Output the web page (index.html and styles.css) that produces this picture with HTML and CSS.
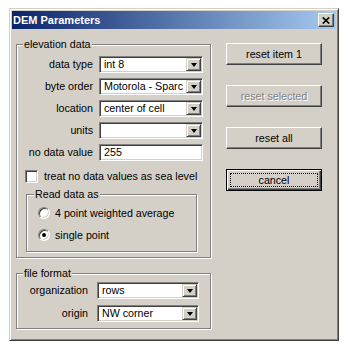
FILE: index.html
```html
<!DOCTYPE html>
<html lang="en">
<head>
    <meta charset="UTF-8">
    <meta name="viewport" content="width=device-width, initial-scale=1.0">
    <title>DEM Parameters</title>
    <link rel="stylesheet" href="styles.css">
</head>
<body>

    <div class="dialog">
        <div class="titlebar">
            <span class="title">DEM Parameters</span>
            <span class="close">
                <svg width="8" height="7" viewBox="0 0 8 7">
                    <path d="M0.8 0.5 L7.2 6.5 M7.2 0.5 L0.8 6.5" stroke="#000" stroke-width="1.7" fill="none"/>
                </svg>
            </span>
        </div>

        <div class="content">
            <div class="left">
                <fieldset class="group group-elev">
                    <legend>elevation data</legend>
                    <div class="elev-body">
                        <div class="form form-elev">
                            <label>data type</label>
                            <div class="combo"><span class="value">int 8</span><span class="arrow"><i></i></span></div>
                            <label>byte order</label>
                            <div class="combo"><span class="value">Motorola - Sparc</span><span class="arrow"><i></i></span></div>
                            <label>location</label>
                            <div class="combo"><span class="value">center of cell</span><span class="arrow"><i></i></span></div>
                            <label>units</label>
                            <div class="combo"><span class="value"></span><span class="arrow"><i></i></span></div>
                            <label>no data value</label>
                            <div class="textbox">255</div>
                        </div>

                        <div class="check-row">
                            <span class="checkbox"></span>
                            <span>treat no data values as sea level</span>
                        </div>

                        <fieldset class="group group-read">
                            <legend>Read data as</legend>
                            <div class="read-body">
                                <div class="radio-row"><span class="radio"></span>4 point weighted average</div>
                                <div class="radio-row"><span class="radio checked"></span>single point</div>
                            </div>
                        </fieldset>
                    </div>
                </fieldset>

                <fieldset class="group group-file">
                    <legend>file format</legend>
                    <div class="file-body">
                        <div class="form form-file">
                            <label>organization</label>
                            <div class="combo"><span class="value">rows</span><span class="arrow"><i></i></span></div>
                            <label>origin</label>
                            <div class="combo"><span class="value">NW corner</span><span class="arrow"><i></i></span></div>
                        </div>
                    </div>
                </fieldset>
            </div>

            <div class="buttons">
                <div class="btn">reset item 1</div>
                <div class="btn disabled">reset selected</div>
                <div class="btn">reset all</div>
                <div class="btn btn-default"><span class="focus">cancel</span></div>
            </div>
        </div>
    </div>

</body>
</html>
```

FILE: styles.css
```css
body {
    margin: 0;
    background: #fff;
    font-family: "Liberation Sans", Arial, sans-serif;
    font-size: 10.7px;
    line-height: 13px;
    color: #000;
}
.dialog {
    width: 330px;
    height: 333px;
    margin: 8px 0 0 9px;
    box-sizing: border-box;
    padding: 2px;
    background: #d4d0c8;
    border: 1px solid;
    border-color: #d4d0c8 #404040 #404040 #d4d0c8;
    box-shadow: inset 1px 1px #fff, inset -1px -1px #808080;
}
.titlebar {
    height: 18px;
    display: flex;
    align-items: center;
    justify-content: space-between;
    padding: 0 2px 0 1px;
    background: linear-gradient(to right, #0a246a, #a6caf0);
    color: #fff;
    font-size: 11px;
    font-weight: bold;
}
.close {
    width: 16px;
    height: 14px;
    box-sizing: border-box;
    display: flex;
    align-items: center;
    justify-content: center;
    background: #d4d0c8;
    border: 1px solid;
    border-color: #fff #404040 #404040 #fff;
    box-shadow: inset -1px -1px #808080;
}
.content {
    display: flex;
    padding: 9px 0 0 4px;
}
.left {
    width: 195px;
}
.group {
    margin: 0;
    padding: 0 0 0 6px;
    min-width: 0;
    border: 1px solid #808080;
    box-shadow: inset 1px 1px #fff, 1px 1px #fff;
}
.group legend {
    margin: 0;
    padding: 0 1px;
    line-height: 13px;
    background: #d4d0c8;
}
.elev-body {
    padding: 5px 7px 5px 2px;
}
.form {
    display: grid;
    grid-auto-rows: 17px;
    align-items: center;
}
.form label {
    text-align: right;
    white-space: nowrap;
}
.form-elev {
    grid-template-columns: 1fr 104px;
    column-gap: 6px;
    row-gap: 5px;
}
.combo,
.textbox {
    height: 17px;
    box-sizing: border-box;
    display: flex;
    background: #fff;
    border: 1px solid;
    border-color: #808080 #fff #fff #808080;
    box-shadow: inset 1px 1px #404040, inset -1px -1px #d4d0c8;
    padding: 1px;
}
.combo .value,
.textbox {
    white-space: nowrap;
    overflow: hidden;
}
.combo .value {
    flex: 1;
    padding-left: 3px;
    line-height: 13px;
}
.textbox {
    padding-left: 4px;
    line-height: 13px;
}
.arrow {
    width: 15px;
    box-sizing: border-box;
    display: flex;
    align-items: center;
    justify-content: center;
    background: #d4d0c8;
    border: 1px solid;
    border-color: #d4d0c8 #404040 #404040 #d4d0c8;
    box-shadow: inset 1px 1px #fff, inset -1px -1px #808080;
}
.arrow i {
    width: 0;
    height: 0;
    border-style: solid;
    border-width: 4px 3.5px 0;
    border-color: #000 transparent transparent;
}
.check-row {
    display: flex;
    align-items: center;
    gap: 6px;
    margin-top: 9px;
    height: 13px;
}
.checkbox {
    width: 13px;
    height: 13px;
    box-sizing: border-box;
    background: #fff;
    border: 1px solid;
    border-color: #808080 #fff #fff #808080;
    box-shadow: inset 1px 1px #404040, inset -1px -1px #d4d0c8;
}
.group-read {
    margin: 5px 0 0 1px;
    padding-left: 7px;
    width: 171px;
    box-sizing: border-box;
}
.read-body {
    padding: 1px 0 5px 4px;
}
.radio-row {
    height: 22px;
    display: flex;
    align-items: center;
    gap: 5px;
}
.radio {
    width: 12px;
    height: 12px;
    box-sizing: border-box;
    display: flex;
    align-items: center;
    justify-content: center;
    border-radius: 50%;
    background: #fff;
    border: 1px solid;
    border-color: #808080 #fff #fff #808080;
    box-shadow: inset 1px 1px #404040, inset -1px -1px #d4d0c8;
}
.radio.checked::after {
    content: "";
    width: 4px;
    height: 4px;
    border-radius: 50%;
    background: #000;
}
.group-file {
    margin-top: 9px;
}
.file-body {
    padding: 2px 11px 6px 2px;
}
.form-file {
    grid-template-columns: 1fr 102px;
    column-gap: 9px;
    row-gap: 6px;
}
.buttons {
    display: flex;
    flex-direction: column;
    gap: 20px;
    margin: 5px 0 0 15px;
}
.btn {
    width: 96px;
    height: 22px;
    box-sizing: border-box;
    display: flex;
    align-items: center;
    justify-content: center;
    background: #d4d0c8;
    border: 1px solid;
    border-color: #fff #404040 #404040 #fff;
    box-shadow: inset -1px -1px #808080;
}
.btn.disabled {
    color: #808080;
    text-shadow: 1px 1px #fff;
}
.btn-default {
    border: 1px solid #000;
    box-shadow: inset 1px 1px #fff, inset -1px -1px #404040, inset -2px -2px #808080;
    padding: 3px;
    align-items: stretch;
}
.btn-default .focus {
    flex: 1;
    display: flex;
    align-items: center;
    justify-content: center;
    border: 1px dotted #000;
}
```
